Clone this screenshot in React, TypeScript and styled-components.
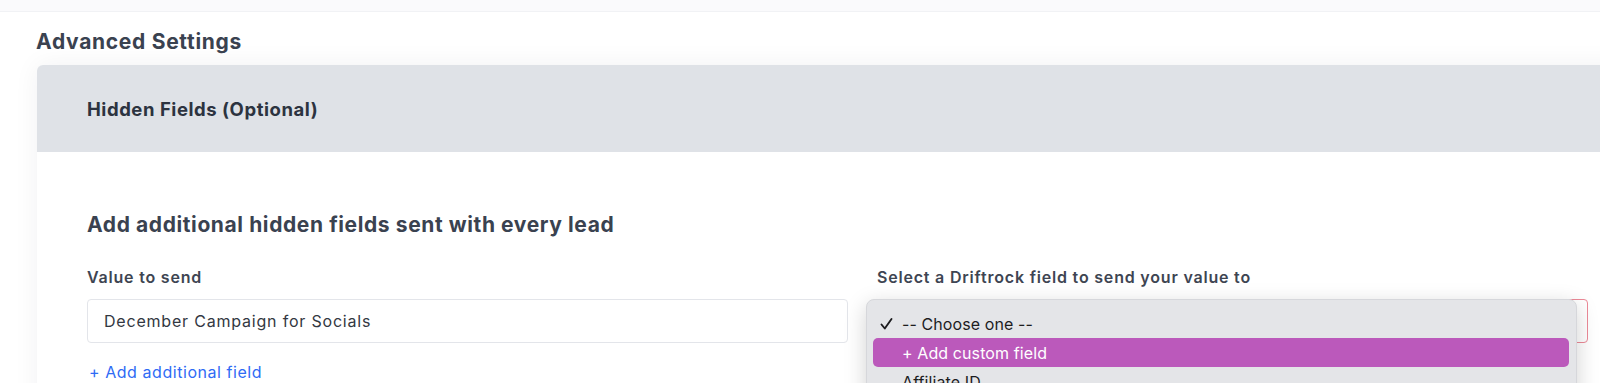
import React, { useState } from 'react';
import styled, { createGlobalStyle } from 'styled-components';

const GlobalStyle = createGlobalStyle`
  html, body {
    margin: 0;
    padding: 0;
    background: #ffffff;
    overflow: hidden;
  }
  body {
    font-family: Inter, "Noto Sans", sans-serif;
    color: #3a4250;
  }
  * { box-sizing: border-box; }
`;

const TopStrip = styled.div`
  height: 12px;
  background: #fafafc;
  border-bottom: 1px solid #f1f2f5;
`;

const Page = styled.div`
  padding: 0 0 0 37px;
`;

const PageTitle = styled.h2`
  margin: 0 0 0 -1px;
  height: 53px;
  padding-top: 5px;
  display: flex;
  align-items: center;
  font-size: 21px;
  font-weight: 700;
  letter-spacing: 0.7px;
  color: #3a4250;
`;

const Card = styled.section`
  margin-right: -40px;
  border-radius: 6px;
  box-shadow: 0 0 26px rgba(20, 30, 50, 0.06);
  background: #ffffff;
`;

const CardHeader = styled.div`
  height: 87px;
  display: flex;
  align-items: center;
  padding-left: 50px;
  background: #dfe2e7;
  border-radius: 6px 6px 0 0;
  font-size: 18.5px;
  font-weight: 700;
  letter-spacing: 0.55px;
  color: #2c3340;
`;

const CardBody = styled.div`
  padding: 59px 52px 40px 50px;
`;

const SectionTitle = styled.h3`
  margin: 0 0 28px;
  font-size: 21px;
  font-weight: 700;
  letter-spacing: 0.6px;
  color: #3a4250;
  line-height: 28px;
`;

const Columns = styled.div`
  display: grid;
  grid-template-columns: 761px 711px;
  column-gap: 29px;
`;

const Field = styled.div`
  display: flex;
  flex-direction: column;
`;

const Label = styled.label`
  font-size: 16px;
  font-weight: 600;
  letter-spacing: 0.8px;
  color: #3e4552;
  line-height: 20px;
  margin-bottom: 12px;
`;

const TextInput = styled.input`
  height: 44px;
  width: 100%;
  border: 1px solid #e3e5ea;
  border-radius: 4px;
  padding: 0 16px;
  font-family: inherit;
  font-size: 16px;
  letter-spacing: 0.8px;
  color: #333842;
  background: #ffffff;
  outline: none;
`;

const AddLink = styled.a`
  display: inline-block;
  margin-top: 19px;
  margin-left: 2px;
  font-size: 16px;
  letter-spacing: 0.55px;
  color: #2f6bf5;
  text-decoration: none;
  cursor: pointer;
  line-height: 20px;
`;

const SelectWrap = styled.div`
  position: relative;
  height: 44px;
`;

const SelectBox = styled.div<{ $invalid?: boolean }>`
  height: 44px;
  border: 1px solid ${({ $invalid }) => ($invalid ? '#ec8a98' : '#e3e5ea')};
  border-radius: 4px;
  background: #ffffff;
`;

const Menu = styled.ul`
  position: absolute;
  left: -11px;
  right: 11px;
  top: 0;
  margin: 0;
  padding: 9px 7px 0 6px;
  list-style: none;
  background: #e4e5e8;
  border: 1px solid #d6d7db;
  border-radius: 8px;
  box-shadow: 0 6px 22px rgba(0, 0, 0, 0.18);
  font-family: Inter, "Liberation Sans", sans-serif;
  font-size: 16px;
  letter-spacing: 0.1px;
  height: 130px;
`;

const MenuItem = styled.li<{ $active?: boolean }>`
  position: relative;
  height: 29px;
  display: flex;
  align-items: center;
  padding-left: 29px;
  border-radius: 5px;
  color: ${({ $active }) => ($active ? '#ffffff' : '#1d1d1f')};
  background: ${({ $active }) => ($active ? '#bb59bb' : 'transparent')};
  cursor: default;
`;

const Check = styled.span`
  position: absolute;
  left: 7px;
  top: 50%;
  transform: translateY(-50%);
  display: flex;
`;

const options = ['-- Choose one --', '+ Add custom field', 'Affiliate ID', 'Campaign', 'Source'];

export default function App() {
  const [value, setValue] = useState('December Campaign for Socials');
  const [selected] = useState(0);
  const [hover, setHover] = useState(1);

  return (
    <>
      <GlobalStyle />
      <TopStrip />
      <Page>
        <PageTitle>Advanced Settings</PageTitle>
        <Card>
          <CardHeader>Hidden Fields (Optional)</CardHeader>
          <CardBody>
            <SectionTitle>Add additional hidden fields sent with every lead</SectionTitle>
            <Columns>
              <Field>
                <Label>Value to send</Label>
                <TextInput value={value} onChange={(e) => setValue(e.target.value)} />
                <AddLink>+ Add additional field</AddLink>
              </Field>
              <Field>
                <Label>Select a Driftrock field to send your value to</Label>
                <SelectWrap>
                  <SelectBox $invalid />
                  <Menu>
                    {options.map((opt, i) => (
                      <MenuItem key={opt} $active={i === hover} onMouseEnter={() => setHover(i)}>
                        {i === selected && (
                          <Check>
                            <svg width="13" height="13" viewBox="0 0 13 13">
                              <path
                                d="M1.5 7 L4.8 11 L11.5 1.5"
                                fill="none"
                                stroke="#1d1d1f"
                                strokeWidth="1.9"
                                strokeLinecap="round"
                                strokeLinejoin="round"
                              />
                            </svg>
                          </Check>
                        )}
                        {opt}
                      </MenuItem>
                    ))}
                  </Menu>
                </SelectWrap>
              </Field>
            </Columns>
          </CardBody>
        </Card>
      </Page>
    </>
  );
}
